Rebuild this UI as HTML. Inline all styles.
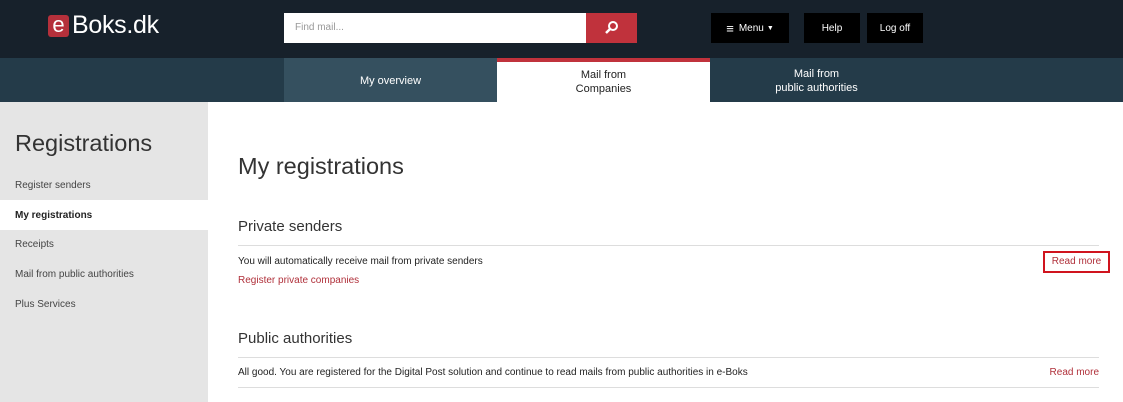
<!DOCTYPE html>
<html><head><meta charset="utf-8"><style>
*{margin:0;padding:0;box-sizing:border-box}
body{width:1123px;height:402px;overflow:hidden;font-family:"Liberation Sans",sans-serif;background:#fff;position:relative;color:#222}
.abs{position:absolute}
.hdr{left:0;top:0;width:1123px;height:58px;background:#17212b}
.nav{left:0;top:58px;width:1123px;height:44px;background:#243b49}
.tab{top:58px;height:44px;width:213px;color:#fff;font-size:11px;text-align:center;display:flex;align-items:center;justify-content:center;line-height:14px}
.btn{top:13px;height:30px;background:#000;color:#fff;font-size:10px;display:flex;align-items:center;justify-content:center}
.side{left:0;top:102px;width:208px;height:300px;background:#e5e5e5}
.si{left:15px;font-size:10px;color:#444}
.red{color:#b0303a}
.hr{left:238px;width:861px;height:1px;background:#ddd}
</style></head><body>
<div class="abs hdr"></div>
<div class="abs" style="left:48px;top:15px;width:21px;height:22px;background:#b5303b;border-radius:3px;color:#fff;font-size:22px;line-height:20px;text-align:center">e</div>
<div class="abs" style="left:72px;top:11px;color:#fff;font-size:25px;letter-spacing:-0.3px">Boks.dk</div>
<div class="abs" style="left:284px;top:13px;width:302px;height:30px;background:#fff;color:#999;font-size:10px;padding:9px 0 0 11px">Find mail...</div>
<div class="abs" style="left:586px;top:13px;width:51px;height:30px;background:#c0323c"><svg width="51" height="30"><circle cx="27" cy="13" r="4" stroke="#fff" stroke-width="2" fill="none"/><line x1="24" y1="16" x2="20" y2="20" stroke="#fff" stroke-width="2.5"/></svg></div>
<div class="abs btn" style="left:711px;width:78px"><span style="font-size:13px;margin-right:5px">&#8801;</span>Menu <span style="font-size:7px;margin-left:3px">▼</span></div>
<div class="abs btn" style="left:804px;width:56px">Help</div>
<div class="abs btn" style="left:867px;width:56px">Log off</div>
<div class="abs nav"></div>
<div class="abs tab" style="left:284px;background:#35505f;padding-top:2px">My overview</div>
<div class="abs tab" style="left:497px;background:#fff;color:#222;border-top:4px solid #c0323c">Mail from<br>Companies</div>
<div class="abs tab" style="left:710px;padding-top:2px">Mail from<br>public authorities</div>
<div class="abs side"></div>
<div class="abs" style="left:15px;top:130px;font-size:23.5px;color:#333">Registrations</div>
<div class="abs si" style="top:180px">Register senders</div>
<div class="abs" style="left:0;top:200px;width:208px;height:30px;background:#fff"></div>
<div class="abs si" style="top:210px;font-weight:bold;color:#222">My registrations</div>
<div class="abs si" style="top:239px">Receipts</div>
<div class="abs si" style="top:269px">Mail from public authorities</div>
<div class="abs si" style="top:299px">Plus Services</div>
<div class="abs" style="left:238px;top:153px;font-size:23.5px;color:#333">My registrations</div>
<div class="abs" style="left:238px;top:218px;font-size:15px;color:#333">Private senders</div>
<div class="abs hr" style="top:245px"></div>
<div class="abs" style="left:238px;top:256px;font-size:10px">You will automatically receive mail from private senders</div>
<div class="abs red" style="left:238px;top:275px;font-size:10px">Register private companies</div>
<div class="abs red" style="left:1043px;top:251px;width:67px;height:22px;border:2px solid #d0141e;font-size:10px;text-align:center;line-height:18px">Read more</div>
<div class="abs" style="left:238px;top:330px;font-size:15px;color:#333">Public authorities</div>
<div class="abs hr" style="top:357px"></div>
<div class="abs" style="left:238px;top:367px;font-size:10px">All good. You are registered for the Digital Post solution and continue to read mails from public authorities in e-Boks</div>
<div class="abs red" style="left:1040px;width:59px;text-align:right;top:367px;font-size:10px">Read more</div>
<div class="abs hr" style="top:387px"></div>
</body></html>
